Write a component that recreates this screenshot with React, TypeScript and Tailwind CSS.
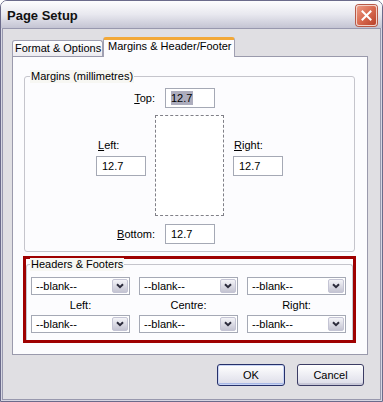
import React from "react"

function Chevron() {
  return (
    <svg width="8" height="6" viewBox="0 0 8 6">
      <path d="M1 1.2 L4 4.2 L7 1.2" fill="none" stroke="#2c2c3c" strokeWidth="2" />
    </svg>
  )
}

function CloseButton() {
  return (
    <div className="mt-[4px] flex h-[21px] w-[21px] items-center justify-center rounded-[3px] border border-[#f3d2c8] bg-gradient-to-br from-[#ec9a84] via-[#d86a50] to-[#b8402a] shadow-[0_0_0_1px_#b85a48]">
      <svg width="11" height="11" viewBox="0 0 11 11">
        <path d="M1.5 1.5 L9.5 9.5 M9.5 1.5 L1.5 9.5" stroke="white" strokeWidth="2" strokeLinecap="square" />
      </svg>
    </div>
  )
}

function TextBox({ value, selected = false }: { value: string; selected?: boolean }) {
  return (
    <div className="flex h-[20px] w-[50px] items-center border border-[#a5a9b5] bg-white pl-[5px]">
      <span className={selected ? "bg-[#adadbd] pr-px leading-[14px]" : "leading-[14px]"}>{value}</span>
    </div>
  )
}

function Combo() {
  return (
    <div className="flex h-[18px] w-[99px] items-center justify-between border border-[#a5a9b5] bg-white p-px">
      <span className="pl-[3px] leading-[14px]">--blank--</span>
      <div className="flex h-full w-[16px] items-center justify-center rounded-[2px] border border-[#c4c4d4] bg-gradient-to-b from-[#f4f4f8] to-[#c4c4d2]">
        <Chevron />
      </div>
    </div>
  )
}

function GroupBox({ title, className, children }: { title: string; className?: string; children: React.ReactNode }) {
  return (
    <div className={`relative rounded-[3px] border border-[#c5c5cc] ${className ?? ""}`}>
      <span className="absolute -top-[7px] bg-[#f7f7f3] px-px leading-[13px]">{title}</span>
      {children}
    </div>
  )
}

export default function App() {
  return (
    <div className="h-[402px] w-[383px] font-['Liberation_Sans',Arial,sans-serif] text-[11px] text-black">
      <div className="flex h-full flex-col overflow-hidden rounded-t-[7px] border border-[#6b6b8b]">
        {/* title bar */}
        <div className="flex h-[27px] shrink-0 items-start justify-between bg-gradient-to-b from-[#fdfdfe] via-[#e8e8ef] to-[#c4c4d3] pl-[6px] pr-[5px]">
          <span className="mt-[7px] text-[13px] font-bold leading-[16px] text-[#111]">Page Setup</span>
          <CloseButton />
        </div>

        <div className="flex flex-1 flex-col bg-[#d6d6e2] px-px pb-px">
          <div className="flex flex-1 flex-col border border-[#9898ae] bg-[#e0dfe3] pl-[9px] pt-[8px]">
            {/* tabs */}
            <div className="flex h-[19px] items-end">
              <div className="h-[16px] w-[91px] rounded-t-[3px] border border-b-0 border-[#a0a0b2] bg-gradient-to-b from-white to-[#ecebf0] pl-[2px] pt-px leading-[13px]">
                Format &amp; Options
              </div>
              <div className="relative z-10 -mb-px h-[20px] w-[132px] rounded-t-[3px] border-x border-t-[3px] border-x-[#a0a0b2] border-t-[#f2a838] bg-[#fcfcfe] pl-[4px] leading-[13px] shadow-[inset_0_-1px_0_#fcfcfe]">
                Margins &amp; Header/Footer
              </div>
            </div>

            {/* panel */}
            <div className="h-[299px] w-[356px] border border-[#9a9aac] bg-[#fcfcfe]">
              <GroupBox title="Margins (millimetres)" className="ml-[11px] mt-[19px] h-[176px] w-[331px] [&>span]:left-[5px]">
                <div className="flex pt-[11px]">
                  <div className="flex h-[20px] w-[130px] items-center justify-end">
                    <span>
                      <u>T</u>op:
                    </span>
                  </div>
                  <div className="pl-[10px]">
                    <TextBox value="12.7" selected />
                  </div>
                </div>

                <div className="mt-[7px] flex h-[101px]">
                  <div className="flex w-[130px] justify-end pr-[9px] pt-[23px]">
                    <div className="w-[50px]">
                      <div className="pl-[2px] leading-[14px]">
                        <u>L</u>eft:
                      </div>
                      <div className="mt-[4px]">
                        <TextBox value="12.7" />
                      </div>
                    </div>
                  </div>
                  <div className="h-[101px] w-[69px] border border-dashed border-[#808088] bg-white" />
                  <div className="pl-[9px] pt-[23px]">
                    <div className="pl-px leading-[14px]">
                      <u>R</u>ight:
                    </div>
                    <div className="mt-[4px]">
                      <TextBox value="12.7" />
                    </div>
                  </div>
                </div>

                <div className="mt-[8px] flex">
                  <div className="flex h-[20px] w-[130px] items-center justify-end">
                    <span>
                      <u>B</u>ottom:
                    </span>
                  </div>
                  <div className="pl-[10px]">
                    <TextBox value="12.7" />
                  </div>
                </div>
              </GroupBox>

              {/* highlighted headers & footers section */}
              <div className="ml-[10px] mt-[4px] flex h-[87px] w-[333px] flex-col border-[3px] border-[#9e0000]">
                <GroupBox title="Headers & Footers" className="mt-[5px] flex-1 rounded-b-none border-b-0 pl-[4px] pt-[12px] [&>span]:left-[3px]">
                  <div className="grid grid-cols-[99px_99px_99px] gap-x-[9px]">
                    <Combo />
                    <Combo />
                    <Combo />
                    <div className="flex h-[20px] items-center justify-center">Left:</div>
                    <div className="flex h-[20px] items-center justify-center">Centre:</div>
                    <div className="flex h-[20px] items-center justify-center">Right:</div>
                    <Combo />
                    <Combo />
                    <Combo />
                  </div>
                </GroupBox>
              </div>
            </div>

            {/* buttons */}
            <div className="mt-[9px] flex w-[356px] justify-end gap-[12px] pr-[4px]">
              <button className="h-[22px] w-[68px] rounded-[3px] border border-[#26306a] bg-gradient-to-b from-white to-[#dcdce8] shadow-[inset_0_0_0_1px_#c8d4f4,inset_0_-2px_0_#a8b8e6]">
                OK
              </button>
              <button className="h-[22px] w-[67px] rounded-[3px] border border-[#3c3c64] bg-gradient-to-b from-white to-[#dcdce8] shadow-[inset_0_-2px_0_#c8c8d8]">
                Cancel
              </button>
            </div>
          </div>
        </div>
      </div>
    </div>
  )
}
